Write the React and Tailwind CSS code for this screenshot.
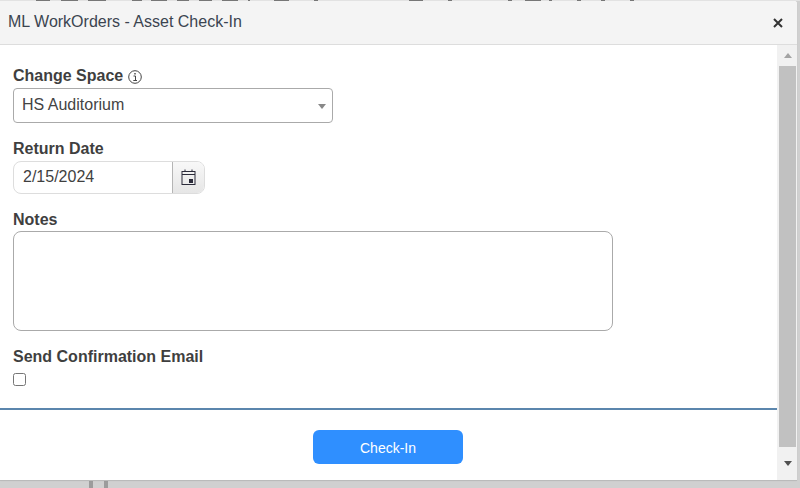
import React from 'react';

const labelClass = "block text-[16px] leading-[20px] font-bold text-[#3f3f3f]";

// [left, width] of the bits of the page that peek out above the dialog
const topBits = [
  [36, 14], [61, 17], [88, 18], [132, 10], [151, 16], [177, 12], [199, 13], [222, 16],
  [248, 2], [274, 15], [314, 4], [409, 14], [448, 4], [508, 4], [525, 16], [549, 3],
  [577, 4], [601, 4], [630, 4],
];

const App = () => {
  return (
    <div className="relative w-[800px] h-[488px] overflow-hidden bg-[#d0d0d0] font-['Liberation_Sans',Arial,sans-serif]">
      {/* Page behind the dialog */}
      <div className="relative h-[1px] bg-[#e2e2e2] overflow-hidden">
        {topBits.map(([left, width]) => (
          <div key={left} className="absolute top-0 h-[1px] bg-[#777777]" style={{ left, width }}></div>
        ))}
      </div>
      <div className="absolute left-[89px] top-[481px] flex gap-[11px]">
        <div className="w-[4px] h-[7px] bg-[#9c9c9c]"></div>
        <div className="w-[4px] h-[7px] bg-[#9c9c9c]"></div>
      </div>

      {/* Dialog */}
      <div className="absolute left-0 top-[1px] w-[797px] h-[479px] bg-white flex flex-col rounded-tr-[3px] shadow-[0_1px_1px_rgba(0,0,0,0.12)]">
        <div className="h-[44px] shrink-0 bg-[#f4f4f4] border-b border-[#dddddd] rounded-tr-[3px] flex items-center justify-between pl-[8px] pr-[14px]">
          <span className="text-[16px] text-[#3b4450] -mt-[2px]">ML WorkOrders - Asset Check-In</span>
          <svg width="10" height="10" viewBox="0 0 10 10" className="text-[#333333]">
            <path d="M1 1 L9 9 M9 1 L1 9" stroke="currentColor" strokeWidth="2" />
          </svg>
        </div>

        <div className="flex-1 flex min-h-0">
          <div className="flex-1 flex flex-col min-w-0">
            <div className="flex-1 pl-[13px] pt-[21px]">
              <div className="flex items-center gap-[5px] h-[20px]">
                <label className={labelClass}>Change Space</label>
                <svg width="14" height="14" viewBox="0 0 14 14" className="text-[#444444] mt-[2px]" fill="none">
                  <circle cx="7" cy="7" r="6.3" stroke="currentColor" strokeWidth="1" />
                  <path d="M5.5 6 H7.5 V10.5 M5.3 10.5 H9" stroke="currentColor" strokeWidth="1" />
                  <rect x="6.3" y="3" width="1.4" height="1.5" fill="currentColor" />
                </svg>
              </div>
              <div className="mt-[2px] w-[320px] h-[35px] border border-[#aaaaaa] rounded-[4px] flex items-center justify-between pl-[8px] pr-[5px]">
                <span className="text-[16px] text-[#444444] -mt-[2px]">HS Auditorium</span>
                <div className="w-0 h-0 mt-[2px] mr-[1px] border-x-[4px] border-x-transparent border-t-[5px] border-t-[#888888]"></div>
              </div>

              <label className={labelClass + " mt-[16px]"}>Return Date</label>
              <div className="mt-[2px] w-[192px] h-[33px] border border-[#dddddd] rounded-[8px] flex overflow-hidden">
                <div className="flex-1 pl-[9px] flex items-center text-[16px] text-[#3f3f3f]">
                  <span className="-mt-[2px]">2/15/2024</span>
                </div>
                <div className="w-[32px] border-l border-[#b5b5b5] bg-gradient-to-b from-[#f8f8f8] to-[#e6e6e6] flex items-center justify-center">
                  <svg width="15" height="17" viewBox="0 0 15 17" fill="none" className="text-[#2b2b3a] -mt-[1px]">
                    <rect x="1" y="2.5" width="13" height="13" stroke="currentColor" strokeWidth="1" />
                    <path d="M1 5.5 H14" stroke="currentColor" strokeWidth="1" />
                    <path d="M4 0.5 V3 M11 0.5 V3" stroke="currentColor" strokeWidth="1" />
                    <rect x="8" y="10" width="4" height="4" fill="currentColor" />
                  </svg>
                </div>
              </div>

              <label className={labelClass + " mt-[16px]"}>Notes</label>
              <textarea className="block mt-[1px] w-[600px] h-[100px] border border-[#aaaaaa] rounded-[8px] resize-none outline-none"></textarea>

              <label className={labelClass + " mt-[16px]"}>Send Confirmation Email</label>
              <div className="mt-[6px] w-[13px] h-[13px] border border-[#767676] rounded-[2.5px] bg-white"></div>
            </div>

            <div className="h-[72px] shrink-0 border-t-2 border-[#5b86ad] flex items-start justify-center pt-[20px] pr-[1px]">
              <button className="w-[150px] h-[34px] pt-[2px] bg-[#2f8fff] rounded-[6px] text-white text-[14px]">Check-In</button>
            </div>
          </div>

          {/* Scrollbar */}
          <div className="w-[20px] shrink-0 bg-[#f1f1f1] flex flex-col items-center pl-[2px] pr-[1px]">
            <div className="h-[21px] shrink-0 flex items-center justify-center">
              <div className="w-0 h-0 border-x-[4.5px] border-x-transparent border-b-[5px] border-b-[#a3a3a3]"></div>
            </div>
            <div className="w-[17px] h-[381px] shrink-0 bg-[#c1c1c1]"></div>
            <div className="flex-1 flex items-center justify-center">
              <div className="w-0 h-0 border-x-[4.5px] border-x-transparent border-t-[5px] border-t-[#505050]"></div>
            </div>
          </div>
        </div>
      </div>
    </div>
  );
};

export default App;
